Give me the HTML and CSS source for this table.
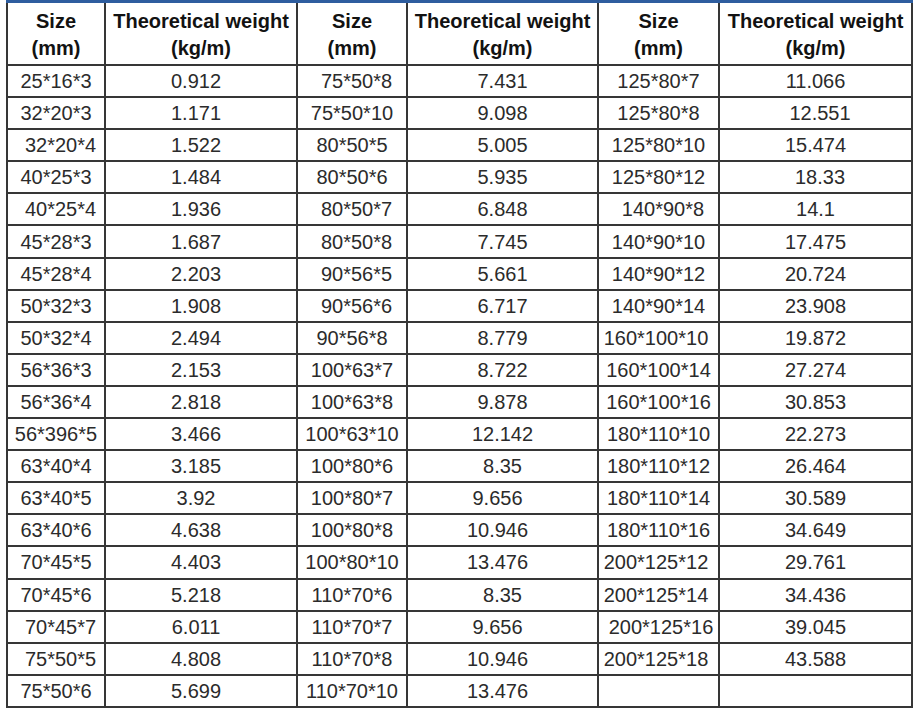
FILE: index.html
```html
<!DOCTYPE html>
<html>
<head>
<meta charset="utf-8">
<link rel="stylesheet" href="styles.css">
</head>
<body>
<table class="sheet">
<colgroup>
<col class="c-size1"><col class="c-w1"><col class="c-size2"><col class="c-w2"><col class="c-size3"><col class="c-w3">
</colgroup>
<thead>
<tr><th>Size<br>(mm)</th><th>Theoretical weight<br>(kg/m)</th><th>Size<br>(mm)</th><th>Theoretical weight<br>(kg/m)</th><th>Size<br>(mm)</th><th>Theoretical weight<br>(kg/m)</th></tr>
</thead>
<tbody>
<tr><td>25*16*3</td><td class="w">0.912</td><td class="sh">75*50*8</td><td>7.431</td><td>125*80*7</td><td>11.066</td></tr>
<tr><td>32*20*3</td><td class="w">1.171</td><td>75*50*10</td><td>9.098</td><td>125*80*8</td><td class="sh">12.551</td></tr>
<tr><td class="sh">32*20*4</td><td class="w">1.522</td><td>80*50*5</td><td>5.005</td><td>125*80*10</td><td>15.474</td></tr>
<tr><td>40*25*3</td><td class="w">1.484</td><td>80*50*6</td><td>5.935</td><td>125*80*12</td><td class="sh">18.33</td></tr>
<tr><td class="sh">40*25*4</td><td class="w">1.936</td><td class="sh">80*50*7</td><td>6.848</td><td class="sh">140*90*8</td><td>14.1</td></tr>
<tr><td>45*28*3</td><td class="w">1.687</td><td class="sh">80*50*8</td><td>7.745</td><td>140*90*10</td><td>17.475</td></tr>
<tr><td>45*28*4</td><td class="w">2.203</td><td class="sh">90*56*5</td><td>5.661</td><td>140*90*12</td><td>20.724</td></tr>
<tr><td>50*32*3</td><td class="w">1.908</td><td class="sh">90*56*6</td><td>6.717</td><td>140*90*14</td><td>23.908</td></tr>
<tr><td>50*32*4</td><td class="w">2.494</td><td>90*56*8</td><td>8.779</td><td class="ls2">160*100*10</td><td>19.872</td></tr>
<tr><td>56*36*3</td><td class="w">2.153</td><td>100*63*7</td><td>8.722</td><td>160*100*14</td><td>27.274</td></tr>
<tr><td>56*36*4</td><td class="w">2.818</td><td>100*63*8</td><td>9.878</td><td>160*100*16</td><td>30.853</td></tr>
<tr><td>56*396*5</td><td class="w">3.466</td><td>100*63*10</td><td>12.142</td><td>180*110*10</td><td>22.273</td></tr>
<tr><td>63*40*4</td><td class="w">3.185</td><td>100*80*6</td><td>8.35</td><td>180*110*12</td><td>26.464</td></tr>
<tr><td>63*40*5</td><td class="w">3.92</td><td>100*80*7</td><td class="ls">9.656</td><td>180*110*14</td><td>30.589</td></tr>
<tr><td>63*40*6</td><td class="w">4.638</td><td>100*80*8</td><td class="ls">10.946</td><td>180*110*16</td><td>34.649</td></tr>
<tr><td>70*45*5</td><td class="w">4.403</td><td>100*80*10</td><td class="ls">13.476</td><td class="ls2">200*125*12</td><td>29.761</td></tr>
<tr><td>70*45*6</td><td class="w">5.218</td><td>110*70*6</td><td>8.35</td><td class="ls2">200*125*14</td><td>34.436</td></tr>
<tr><td class="sh">70*45*7</td><td class="w">6.011</td><td>110*70*7</td><td class="ls">9.656</td><td class="sh2">200*125*16</td><td>39.045</td></tr>
<tr><td class="sh">75*50*5</td><td class="w">4.808</td><td>110*70*8</td><td class="ls">10.946</td><td class="ls2">200*125*18</td><td>43.588</td></tr>
<tr><td>75*50*6</td><td class="w">5.699</td><td>110*70*10</td><td class="ls">13.476</td><td></td><td></td></tr>
</tbody>
</table>
</body>
</html>
```
FILE: styles.css
```css
html, body {
  margin: 0;
  padding: 0;
  background: #ffffff;
}

body {
  font-family: "Liberation Sans", Arial, sans-serif;
}

.sheet {
  margin-left: 6px;
  border-collapse: collapse;
  table-layout: fixed;
  width: 905px;
}

.c-size1 { width: 98px; }
.c-w1 { width: 192px; }
.c-size2 { width: 110px; }
.c-w2 { width: 191px; }
.c-size3 { width: 121px; }
.c-w3 { width: 193px; }

.sheet th,
.sheet td {
  border: 2px solid #363636;
  padding: 0;
  text-align: center;
  white-space: nowrap;
  overflow: hidden;
}

.sheet thead th {
  border-top: 3px solid #2e5d9f;
  height: 58px;
  padding-top: 3px;
  font-size: 20px;
  line-height: 27px;
  font-weight: bold;
  color: #121212;
}

.sheet td {
  height: 30.1px;
  font-size: 20px;
  line-height: 24px;
  color: #2b2b2b;
}

.sheet td.w {
  padding-right: 10px;
}

.sheet td.sh {
  padding-left: 9px;
}

.sheet td.sh2 {
  padding-left: 5px;
}

.sheet td.ls {
  padding-right: 10px;
}

.sheet td.ls2 {
  padding-right: 5px;
}
```
